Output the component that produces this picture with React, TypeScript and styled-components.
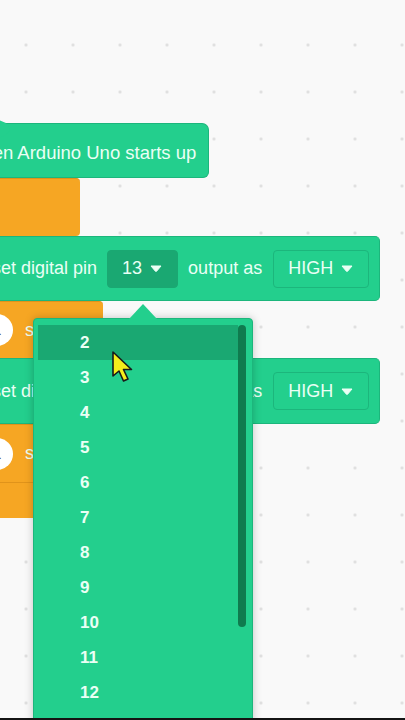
import React from 'react';
import styled, { createGlobalStyle } from 'styled-components';

const GlobalStyle = createGlobalStyle`
  html, body {
    margin: 0;
    padding: 0;
    overflow: hidden;
    background: #f9f9f9;
  }
  body {
    font-family: "Liberation Sans", Arial, sans-serif;
  }
`;

const GREEN = '#23cf8d';
const GREEN_DARK = '#1aa872';
const GREEN_EDGE = '#1cb67c';
const ORANGE = '#f6a623';
const ORANGE_EDGE = '#e0931a';
const BLOCK_TEXT = '#eafff5';

const Page = styled.div`
  width: 405px;
  height: 720px;
  display: flex;
  flex-direction: column;
`;

const Workspace = styled.div`
  position: relative;
  height: 718px;
  overflow: hidden;
  background-color: #f9f9f9;
  background-image: radial-gradient(circle, #dcdcdc 1.2px, transparent 1.6px);
  background-size: 47px 47px;
  background-position: 2.5px 21.5px;
`;

const FrameEdge = styled.div`
  height: 2px;
  background: #141414;
`;

/* script stack sits on the canvas at its own coordinates */
const Script = styled.div`
  position: absolute;
  left: -60px;
  top: 123px;
  display: flex;
  flex-direction: column;
  align-items: flex-start;
`;

const Label = styled.span<{ $size?: number; $gap?: string }>`
  font-size: ${(p) => p.$size ?? 18}px;
  margin: ${(p) => p.$gap ?? '0'};
  color: ${BLOCK_TEXT};
  white-space: nowrap;
`;

const HatBlock = styled.div`
  position: relative;
  height: 55px;
  box-sizing: border-box;
  display: flex;
  align-items: center;
  padding: 4px 12px 0 29px;
  background: ${GREEN};
  border: 1px solid ${GREEN_EDGE};
  border-left: none;
  border-radius: 0 7px 6px 0;

  &::before {
    content: '';
    position: absolute;
    left: 0;
    top: -7px;
    width: 70px;
    height: 24px;
    border-radius: 50%;
    background: ${GREEN};
  }
`;

const Forever = styled.div`
  display: flex;
  flex-direction: column;
  align-items: flex-start;
`;

const OrangeBar = styled.div<{ $h: number; $w: number }>`
  width: ${(p) => p.$w}px;
  height: ${(p) => p.$h}px;
  box-sizing: border-box;
  background: ${ORANGE};
  border-radius: 0 4px 4px 0;
  border-top: 1px solid ${ORANGE_EDGE};
`;

const LoopBody = styled.div`
  display: flex;
  align-items: stretch;
`;

const LoopArm = styled.div`
  width: 16px;
  background: ${ORANGE};
`;

const Inner = styled.div`
  display: flex;
  flex-direction: column;
  align-items: flex-start;
`;

const SetPinBlock = styled.div<{ $h: number }>`
  height: ${(p) => p.$h}px;
  box-sizing: border-box;
  display: flex;
  align-items: center;
  padding: 0 10px 0 36px;
  background: ${GREEN};
  border: 1px solid ${GREEN_EDGE};
  border-left: none;
  border-radius: 0 5px 5px 0;
`;

const Field = styled.div<{ $filled?: boolean; $gap: string }>`
  height: 38px;
  box-sizing: border-box;
  display: flex;
  align-items: center;
  gap: 8px;
  padding: 0 15px 0 14px;
  margin: ${(p) => p.$gap};
  border-radius: 4px;
  background: ${(p) => (p.$filled ? GREEN_DARK : GREEN)};
  border: 1px solid ${(p) => (p.$filled ? GREEN_DARK : GREEN_EDGE)};
`;

const WaitBlock = styled.div<{ $h: number }>`
  width: 147px;
  height: ${(p) => p.$h}px;
  box-sizing: border-box;
  display: flex;
  align-items: center;
  gap: 12px;
  padding-left: 25px;
  background: ${ORANGE};
  border-top: 1px solid ${ORANGE_EDGE};
  border-radius: 0 4px 4px 0;
`;

const NumberSlot = styled.div`
  width: 32px;
  height: 32px;
  border-radius: 50%;
  background: #ffffff;
  display: flex;
  align-items: center;
  justify-content: center;
  font-size: 16px;
  color: #555;
`;

const Menu = styled.div`
  position: absolute;
  left: 33px;
  top: 318px;
  width: 220px;
  box-sizing: border-box;
  padding: 6px 14px 0 4px;
  background: ${GREEN};
  border: 1px solid ${GREEN_EDGE};
  border-radius: 4px;
  box-shadow: 0 0 9px rgba(0, 0, 0, 0.22);

  &::before {
    content: '';
    position: absolute;
    left: 95px;
    top: -15px;
    border-left: 14px solid transparent;
    border-right: 14px solid transparent;
    border-bottom: 15px solid ${GREEN};
  }
`;

const MenuItem = styled.div<{ $selected?: boolean }>`
  height: 35px;
  display: flex;
  align-items: center;
  padding-left: 42px;
  font-size: 17px;
  font-weight: 700;
  color: ${BLOCK_TEXT};
  background: ${(p) => (p.$selected ? GREEN_DARK : 'transparent')};
`;

const ScrollThumb = styled.div`
  position: absolute;
  right: 6px;
  top: 6px;
  width: 8px;
  height: 302px;
  border-radius: 4px;
  background: #0f7b4e;
`;

const Pointer = styled.svg`
  position: absolute;
  left: 111px;
  top: 350px;
`;

const Caret = () => (
  <svg width="12" height="7" viewBox="0 0 12 7">
    <path d="M1 1 H11 L6.6 6.2 Q6 6.8 5.4 6.2 Z" fill={BLOCK_TEXT} stroke={BLOCK_TEXT} strokeWidth="1" strokeLinejoin="round" />
  </svg>
);

const SetPin: React.FC<{ pin: string; level: string; h: number }> = ({ pin, level, h }) => (
  <SetPinBlock $h={h}>
    <Label>set digital pin</Label>
    <Field $filled $gap="0 0 0 10px">
      <Label>{pin}</Label>
      <Caret />
    </Field>
    <Label $gap="0 0 0 10px">output as</Label>
    <Field $gap="0 0 0 11px">
      <Label>{level}</Label>
      <Caret />
    </Field>
  </SetPinBlock>
);

const Wait: React.FC<{ h: number }> = ({ h }) => (
  <WaitBlock $h={h}>
    <NumberSlot>1</NumberSlot>
    <Label>seconds</Label>
  </WaitBlock>
);

const pins = ['2', '3', '4', '5', '6', '7', '8', '9', '10', '11', '12', '13', 'A0', 'A1'];

const App: React.FC = () => {
  return (
    <Page>
      <GlobalStyle />
      <Workspace>
        <Script>
          <HatBlock>
            <Label $size={18.5}>when Arduino Uno starts up</Label>
          </HatBlock>
          <Forever>
            <OrangeBar $w={140} $h={58} />
            <LoopBody>
              <LoopArm />
              <Inner>
                <SetPin pin="13" level="HIGH" h={65} />
                <Wait h={57} />
                <SetPin pin="13" level="HIGH" h={66} />
                <Wait h={58} />
              </Inner>
            </LoopBody>
            <OrangeBar $w={140} $h={36} />
          </Forever>
        </Script>

        <Menu>
          {pins.map((p, i) => (
            <MenuItem key={p} $selected={i === 0}>
              {p}
            </MenuItem>
          ))}
          <ScrollThumb />
        </Menu>

        <Pointer width="26" height="36" viewBox="0 0 26 36">
          <path
            d="M2 2 L2 26 L8 21 L12.5 31 L17 29 L12.5 19.5 L20.5 19.5 Z"
            fill="#f4ee1c"
            stroke="#1a1a1a"
            strokeWidth="1.6"
            strokeLinejoin="round"
          />
        </Pointer>
      </Workspace>
      <FrameEdge />
    </Page>
  );
};

export default App;
